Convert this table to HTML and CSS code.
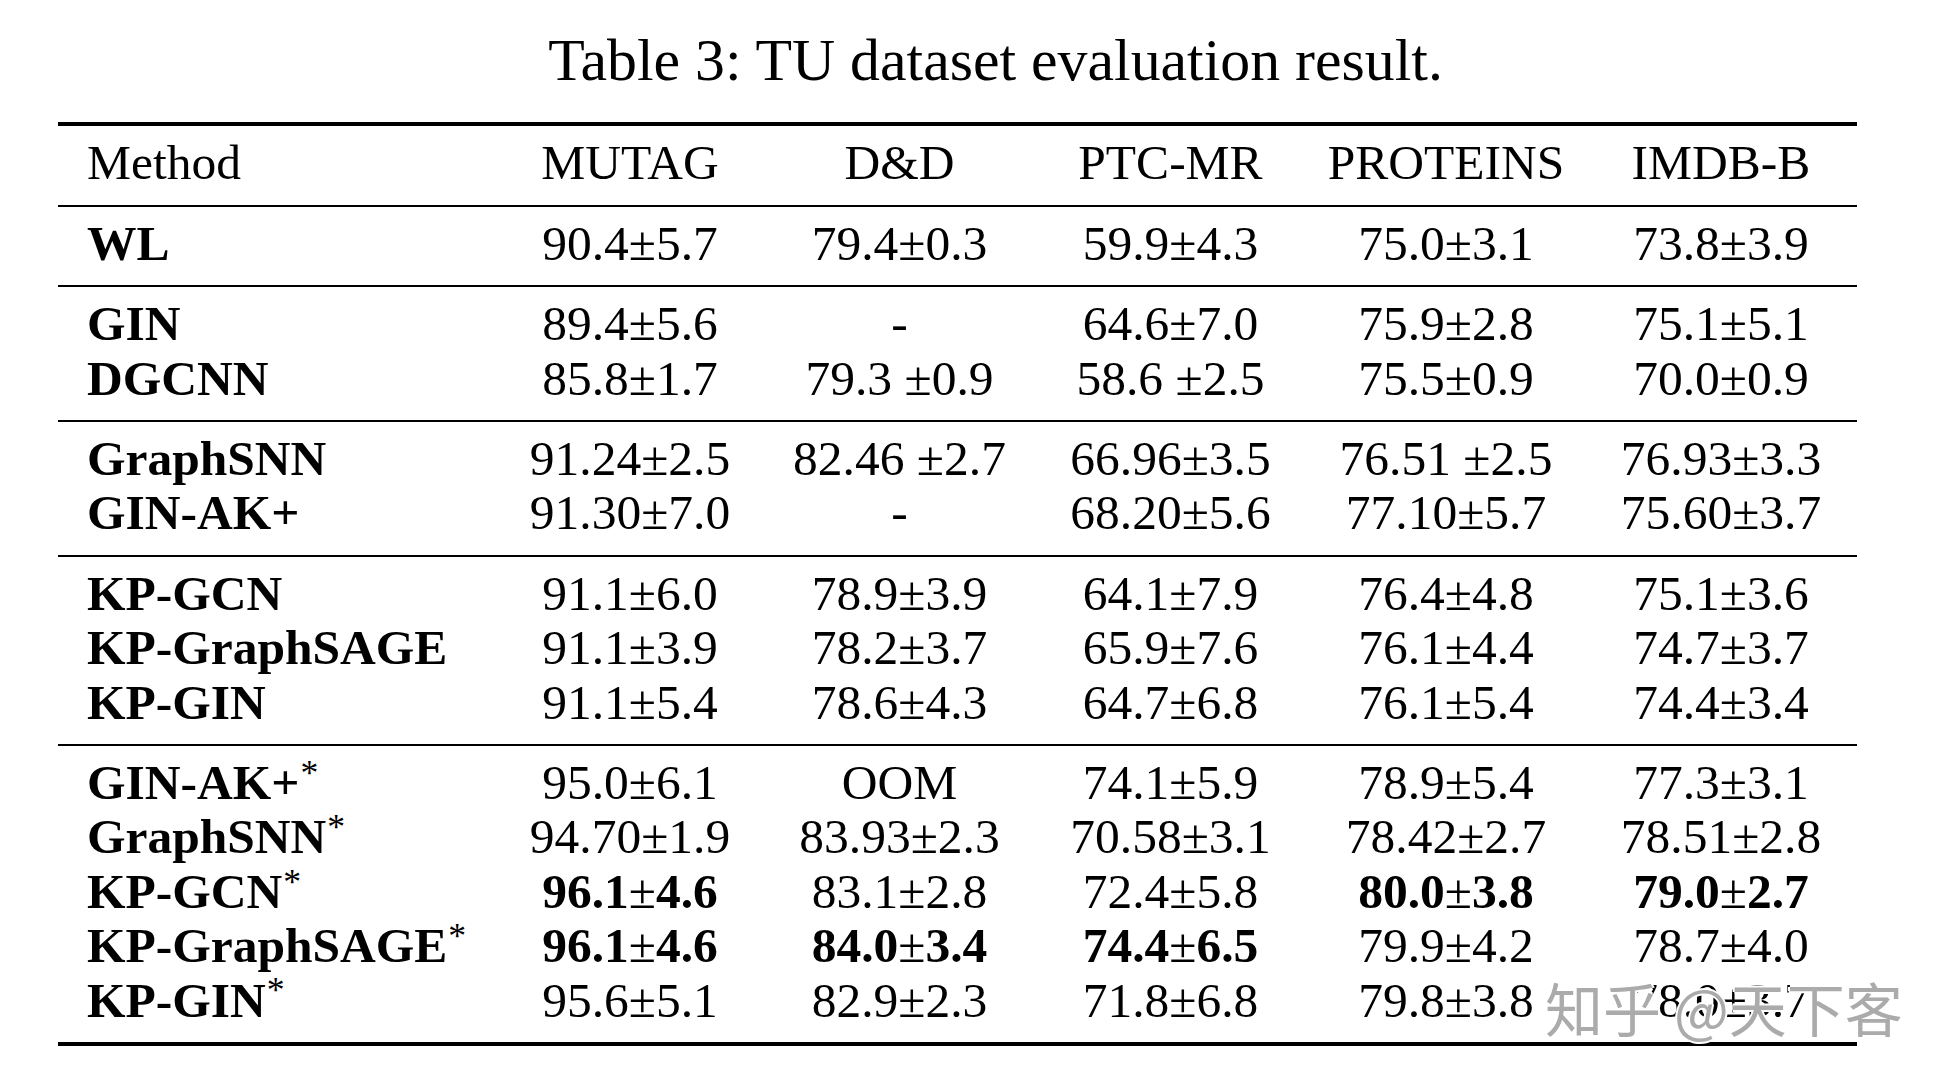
FILE: index.html
```html
<!DOCTYPE html>
<html lang="en">
<head>
<meta charset="utf-8">
<title>Table 3: TU dataset evaluation result.</title>
<link rel="stylesheet" href="styles.css">
</head>
<body>
<div class="page">
  <p class="caption">Table 3: TU dataset evaluation result.</p>
  <table class="results">
    <colgroup>
      <col class="c-method">
      <col class="c-mutag">
      <col class="c-dd">
      <col class="c-ptc">
      <col class="c-proteins">
      <col class="c-imdb">
    </colgroup>
    <thead>
      <tr>
        <th class="method">Method</th>
        <th>MUTAG</th>
        <th>D&amp;D</th>
        <th>PTC-MR</th>
        <th>PROTEINS</th>
        <th>IMDB-B</th>
      </tr>
    </thead>
    <tbody>
      <tr>
        <td class="method">WL</td>
        <td>90.4±5.7</td><td>79.4±0.3</td><td>59.9±4.3</td><td>75.0±3.1</td><td>73.8±3.9</td>
      </tr>
    </tbody>
    <tbody>
      <tr>
        <td class="method">GIN</td>
        <td>89.4±5.6</td><td>-</td><td>64.6±7.0</td><td>75.9±2.8</td><td>75.1±5.1</td>
      </tr>
      <tr>
        <td class="method">DGCNN</td>
        <td>85.8±1.7</td><td>79.3 ±0.9</td><td>58.6 ±2.5</td><td>75.5±0.9</td><td>70.0±0.9</td>
      </tr>
    </tbody>
    <tbody>
      <tr>
        <td class="method">GraphSNN</td>
        <td>91.24±2.5</td><td>82.46 ±2.7</td><td>66.96±3.5</td><td>76.51 ±2.5</td><td>76.93±3.3</td>
      </tr>
      <tr>
        <td class="method">GIN-AK+</td>
        <td>91.30±7.0</td><td>-</td><td>68.20±5.6</td><td>77.10±5.7</td><td>75.60±3.7</td>
      </tr>
    </tbody>
    <tbody>
      <tr>
        <td class="method">KP-GCN</td>
        <td>91.1±6.0</td><td>78.9±3.9</td><td>64.1±7.9</td><td>76.4±4.8</td><td>75.1±3.6</td>
      </tr>
      <tr>
        <td class="method">KP-GraphSAGE</td>
        <td>91.1±3.9</td><td>78.2±3.7</td><td>65.9±7.6</td><td>76.1±4.4</td><td>74.7±3.7</td>
      </tr>
      <tr>
        <td class="method">KP-GIN</td>
        <td>91.1±5.4</td><td>78.6±4.3</td><td>64.7±6.8</td><td>76.1±5.4</td><td>74.4±3.4</td>
      </tr>
    </tbody>
    <tbody class="last">
      <tr>
        <td class="method">GIN-AK+<span class="star">*</span></td>
        <td>95.0±6.1</td><td>OOM</td><td>74.1±5.9</td><td>78.9±5.4</td><td>77.3±3.1</td>
      </tr>
      <tr>
        <td class="method">GraphSNN<span class="star">*</span></td>
        <td>94.70±1.9</td><td>83.93±2.3</td><td>70.58±3.1</td><td>78.42±2.7</td><td>78.51±2.8</td>
      </tr>
      <tr>
        <td class="method">KP-GCN<span class="star">*</span></td>
        <td><b>96.1</b>±<b>4.6</b></td><td>83.1±2.8</td><td>72.4±5.8</td><td><b>80.0</b>±<b>3.8</b></td><td><b>79.0</b>±<b>2.7</b></td>
      </tr>
      <tr>
        <td class="method">KP-GraphSAGE<span class="star">*</span></td>
        <td><b>96.1</b>±<b>4.6</b></td><td><b>84.0</b>±<b>3.4</b></td><td><b>74.4</b>±<b>6.5</b></td><td>79.9±4.2</td><td>78.7±4.0</td>
      </tr>
      <tr>
        <td class="method">KP-GIN<span class="star">*</span></td>
        <td>95.6±5.1</td><td>82.9±2.3</td><td>71.8±6.8</td><td>79.8±3.8</td><td>78.0±3.7</td>
      </tr>
    </tbody>
  </table>
  <div class="watermark">知乎 @天下客</div>
</div>
</body>
</html>
```

FILE: styles.css
```css
html, body {
  margin: 0;
  padding: 0;
  background: #ffffff;
}

body {
  font-family: "Liberation Serif", "Times New Roman", serif;
  color: #000000;
}

.page {
  position: relative;
  width: 1954px;
  height: 1088px;
  padding-top: 31px;
  box-sizing: border-box;
}

.caption {
  margin: 0 0 32px 0;
  padding-left: 37px;
  font-size: 59.8px;
  line-height: 59.4px;
  text-align: center;
}

.results {
  margin-left: 58px;
  width: 1799px;
  table-layout: fixed;
  border-collapse: separate;
  border-spacing: 0;
  font-size: 49.5px;
}

.c-method { width: 437px; }
.c-mutag { width: 270px; }
.c-dd { width: 269px; }
.c-ptc { width: 273px; }
.c-proteins { width: 278px; }
.c-imdb { width: 272px; }

.results th,
.results td {
  padding: 0;
  line-height: 54.4px;
  text-align: center;
  white-space: nowrap;
  font-weight: 400;
}

.results th {
  border-top: 4px solid #000;
  padding-top: 10px;
  padding-bottom: 14px;
}

.results tbody tr:first-child td {
  border-top: 2px solid #000;
  padding-top: 10px;
}

.results tbody tr:last-child td {
  padding-bottom: 14px;
}

.results tbody.last tr:last-child td {
  border-bottom: 4px solid #000;
}

.results .method {
  text-align: left;
  padding-left: 29px;
}

.results td.method {
  font-weight: 700;
}

.results b {
  font-weight: 700;
}

.star {
  font-weight: 400;
  font-size: 0.72em;
  line-height: 0;
  vertical-align: 0.4em;
  margin-left: 1px;
}

.watermark {
  position: absolute;
  left: 1545px;
  top: 972px;
  font-family: "Noto Sans CJK SC", "Noto Sans", sans-serif;
  font-size: 58px;
  line-height: 70px;
  color: #ababab;
  white-space: nowrap;
  text-shadow: 2px 0 0 #fff, -2px 0 0 #fff, 0 2px 0 #fff, 0 -2px 0 #fff;
}
```
